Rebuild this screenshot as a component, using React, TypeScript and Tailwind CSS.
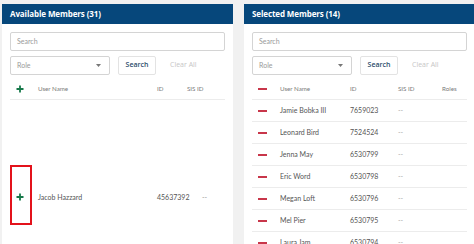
import React from 'react';

type Member = { name: string; id: string; sis: string };

const selected: Member[] = [
  { name: 'Jamie Bobka III', id: '7659023', sis: '--' },
  { name: 'Leonard Bird', id: '7524524', sis: '--' },
  { name: 'Jenna May', id: '6530799', sis: '--' },
  { name: 'Eric Word', id: '6530798', sis: '--' },
  { name: 'Megan Loft', id: '6530796', sis: '--' },
  { name: 'Mel Pier', id: '6530795', sis: '--' },
  { name: 'Laura Jam', id: '6530794', sis: '--' },
];

const lato = { fontFamily: 'Lato, "Liberation Sans", sans-serif' };

const PlusIcon = () => (
  <svg width="8" height="8" viewBox="0 0 8 8">
    <path d="M4 0.5v7M0.5 4h7" stroke="#17794a" strokeWidth="1.8" />
  </svg>
);

const MinusIcon = () => (
  <svg width="9" height="4" viewBox="0 0 9 4">
    <rect x="0" y="1" width="9" height="2" fill="#c8364a" />
  </svg>
);

const Filters: React.FC = () => (
  <>
    <div
      className="h-[19px] border border-[#d4d4d4] rounded-[2px] flex items-center px-[6px] text-[7px] text-[#9a9a9a]"
      style={lato}
    >
      Search
    </div>
    <div className="flex items-center mt-[5px]">
      <div
        className="w-[100px] h-[19px] border border-[#d4d4d4] rounded-[2px] flex items-center justify-between pl-[6px] pr-[8px] text-[7px] text-[#9a9a9a]"
        style={lato}
      >
        <span>Role</span>
        <svg width="5" height="3" viewBox="0 0 5 3">
          <path d="M0 0h5L2.5 3z" fill="#777" />
        </svg>
      </div>
      <div className="ml-[8px] w-[38px] h-[19px] border border-[#e3e3e3] rounded-[2px] flex items-center justify-center text-[7px] font-semibold text-[#2b4c6a]">
        Search
      </div>
      <div className="ml-[14px] text-[7px] text-[#c6c6c6]">Clear All</div>
    </div>
  </>
);

export default function App() {
  return (
    <div
      className="w-[474px] h-[244px] overflow-hidden bg-[#f1f1f1] flex gap-[11px] pl-[2px] pt-[4px]"
      style={{ fontFamily: '"Open Sans", "Liberation Sans", sans-serif' }}
    >
      {/* available */}
      <div className="w-[231px] shrink-0 bg-white relative">
        <div className="h-[20px] bg-[#06477b] flex items-center px-[8px] text-white text-[8px] font-bold tracking-[-0.1px]">
          Available Members (31)
        </div>
        <div className="px-[8px] pt-[8px]">
          <Filters />
          <div className="flex items-center h-[22px] mt-[3px] border-b border-[#ececec] text-[6.2px] text-[#7a7a7a]" style={lato}>
            <div className="w-[28px] pl-[6px] flex items-center"><PlusIcon /></div>
            <div className="w-[119px]">User Name</div>
            <div className="w-[30px]">ID</div>
            <div>SIS ID</div>
          </div>
          <div className="h-[86px]" />
          <div className="flex items-center h-[22px] text-[7px] text-[#555]" style={lato}>
            <div className="w-[28px] pl-[6px] flex items-center"><PlusIcon /></div>
            <div className="w-[119px]">Jacob Hazzard</div>
            <div className="w-[45px]">45637392</div>
            <div className="text-[#999]">--</div>
          </div>
        </div>
        <div className="absolute left-[8px] top-[161px] w-[22px] h-[60px] border-2 border-[#e3121b]" />
      </div>

      {/* selected */}
      <div className="w-[231px] shrink-0 bg-white">
        <div className="h-[20px] bg-[#06477b] flex items-center px-[8px] text-white text-[8px] font-bold tracking-[-0.1px]">
          Selected Members (14)
        </div>
        <div className="px-[8px] pt-[8px]">
          <Filters />
          <div className="flex items-center h-[22px] mt-[3px] border-b border-[#ececec] text-[6.2px] text-[#7a7a7a]" style={lato}>
            <div className="w-[28px] pl-[6px] flex items-center"><MinusIcon /></div>
            <div className="w-[70px]">User Name</div>
            <div className="w-[48px]">ID</div>
            <div className="w-[44px]">SIS ID</div>
            <div>Roles</div>
          </div>
          {selected.map((m) => (
            <div
              key={m.id}
              className="flex items-center h-[22px] border-b border-[#ececec] text-[7px] text-[#555]"
              style={lato}
            >
              <div className="w-[28px] pl-[6px] flex items-center"><MinusIcon /></div>
              <div className="w-[70px]">{m.name}</div>
              <div className="w-[48px]">{m.id}</div>
              <div className="w-[44px] text-[#aaa]">{m.sis}</div>
            </div>
          ))}
        </div>
      </div>
    </div>
  );
}
